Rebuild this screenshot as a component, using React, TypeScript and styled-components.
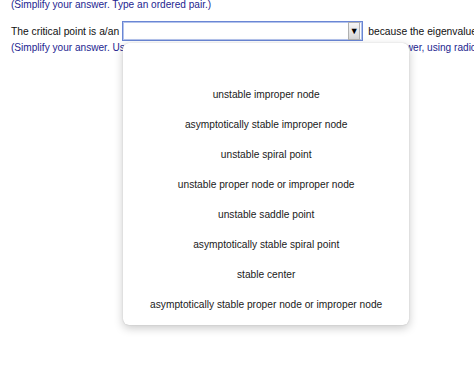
import React from 'react';
import styled, { createGlobalStyle } from 'styled-components';

const GlobalStyle = createGlobalStyle`
  html, body {
    margin: 0;
    padding: 0;
    background: #ffffff;
    overflow: hidden;
  }
  body {
    font-family: 'Liberation Sans', Arial, sans-serif;
    font-size: 10.3px;
    color: #111;
  }
`;

const Page = styled.div`
  width: 474px;
  height: 366px;
  padding-left: 11px;
  box-sizing: border-box;
  overflow: hidden;
`;

const Hint = styled.div<{ $top: number }>`
  margin-top: ${(p) => p.$top}px;
  line-height: 12px;
  font-size: 10.1px;
  color: #1d2590;
  white-space: nowrap;
`;

const Row = styled.div`
  display: flex;
  align-items: center;
  margin-top: 10px;
  height: 20px;
  white-space: nowrap;
`;

const Label = styled.span`
  margin-right: 3px;
`;

const SelectWrap = styled.div`
  position: relative;
  flex-shrink: 0;
  width: 241px;
  height: 20px;
  margin-right: 5px;
`;

const SelectBox = styled.div`
  display: flex;
  justify-content: flex-end;
  align-items: center;
  box-sizing: border-box;
  width: 100%;
  height: 100%;
  border: 1px solid #6a86d4;
  box-shadow: inset 0 0 0 1px #b3c3ec;
  background: #fff;
  padding-right: 2px;
`;

const ArrowButton = styled.div`
  display: flex;
  align-items: center;
  justify-content: center;
  width: 10px;
  height: 16px;
  background: linear-gradient(#f6f6f6, #d6d6d6);
  border: 1px solid #b0b0b0;
  font-size: 9px;
  color: #000;
`;

const Menu = styled.ul`
  position: absolute;
  top: 22px;
  left: 1px;
  width: 286px;
  margin: 0;
  padding: 7px 0 5px;
  list-style: none;
  background: #fff;
  border-radius: 6px;
  box-shadow: 0 3px 10px rgba(0, 0, 0, 0.22), 0 0 1px rgba(0, 0, 0, 0.25);
  z-index: 2;
`;

const Option = styled.li`
  height: 30px;
  line-height: 30px;
  text-align: center;
  color: #1a1a1a;
  font-size: 10.2px;
`;

const options = [
  '',
  'unstable improper node',
  'asymptotically stable improper node',
  'unstable spiral point',
  'unstable proper node or improper node',
  'unstable saddle point',
  'asymptotically stable spiral point',
  'stable center',
  'asymptotically stable proper node or improper node',
];

export default function App() {
  return (
    <>
      <GlobalStyle />
      <Page>
        <Hint $top={-1}>(Simplify your answer. Type an ordered pair.)</Hint>
        <Row>
          <Label>The critical point is a/an</Label>
          <SelectWrap>
            <SelectBox>
              <ArrowButton>▼</ArrowButton>
            </SelectBox>
            <Menu>
              {options.map((o, i) => (
                <Option key={i}>{o || '\u00a0'}</Option>
              ))}
            </Menu>
          </SelectWrap>
          <span>because the eigenvalues are</span>
        </Row>
        <Hint $top={1}>
          (Simplify your answer. Use a comma to separate answers as needed. Type an exact answer, using radicals as needed.)
        </Hint>
      </Page>
    </>
  );
}
